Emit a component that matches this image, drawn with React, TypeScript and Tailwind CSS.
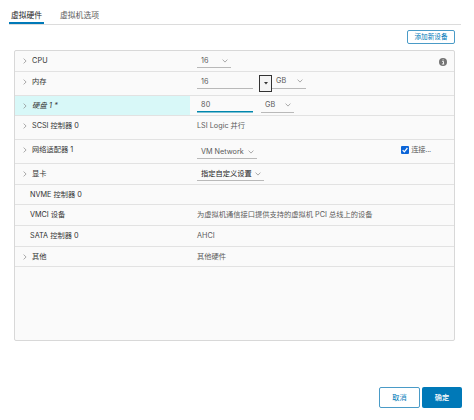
import type { ReactNode } from "react";

const Chevron = ({ className }: { className: string }) => (
  <svg viewBox="0 0 6 6" className={className} fill="none" stroke="currentColor">
    <path d="M0.6 1.6 3 4.1 5.4 1.6" strokeWidth="0.7" />
  </svg>
);

function Select({ children, className }: { children: ReactNode; className: string }) {
  return (
    <div className={`flex items-center justify-between border-b border-[#b9b9b9] pl-1 pr-[3px] ${className}`}>
      <span>{children}</span>
      <Chevron className="size-[6px] text-[#888]" />
    </div>
  );
}

type RowProps = {
  label: ReactNode;
  height: string;
  labelClass?: string;
  expandable?: boolean;
  children?: ReactNode;
};

function Row({ label, height, labelClass = "", expandable, children }: RowProps) {
  return (
    <div className={`flex border-b border-[#e2e2e2] ${height}`}>
      <div className={`flex w-[175px] shrink-0 items-center pl-[7px] text-[#333] ${labelClass}`}>
        {expandable && <Chevron className="mr-[4px] size-[6px] -rotate-90 text-[#888]" />}
        <span className={expandable ? "" : "pl-[8px]"}>{label}</span>
      </div>
      <div className="flex min-w-0 flex-1 items-center pl-[7px]">{children}</div>
    </div>
  );
}

export default function App() {
  return (
    <div className="flex h-[420px] w-[474px] flex-col whitespace-nowrap bg-white font-['Inter','Noto_Sans_CJK_SC',sans-serif] text-[7.25px] leading-[10px] text-[#5a5a5a]">
      <nav className="ml-[9px] mr-[13px] flex h-[25px] shrink-0 items-end border-b border-[#dcdcdc] text-[7.8px]">
        <div className="flex h-[14px] w-[35px] justify-center border-b-2 border-[#0079b8] text-[#222]">虚拟硬件</div>
        <div className="ml-4 h-[14px]">虚拟机选项</div>
      </nav>

      <div className="mr-[19px] mt-[5px] flex shrink-0 justify-end">
        <button className="h-[14px] w-[48px] rounded-[2px] border border-[#4a9bc7] text-[6.6px] leading-[12px] text-[#0079b8]">添加新设备</button>
      </div>

      <main className="ml-[14px] mt-[6px] h-[291px] w-[441px] shrink-0 rounded-[2px] border border-[#d8d8d8] bg-[#fafafa]">
        <Row label="CPU" height="h-[21px]" labelClass="tracking-[0.2px]" expandable>
          <Select className="h-[14px] w-[34px]">16</Select>
          <svg viewBox="0 0 8 8" className="ml-auto mr-[7px] mt-px size-[8px]">
            <circle cx="4" cy="4" r="4" fill="#747474" />
            <path d="M3.1 3.4h1.4v2.5M2.9 6h2.3M3.6 1.9h1" fill="none" stroke="#fff" strokeWidth="0.9" />
          </svg>
        </Row>
        <Row label="内存" height="h-[24px]" labelClass="pb-[3px]" expandable>
          <div className="-mt-1 h-[14px] w-[56px] border-b border-[#b9b9b9] pl-1 leading-[13px]">16</div>
          <div className="ml-[6px] flex h-[17px] w-[13px] items-center justify-center border border-[#333] bg-[#f4f4f4]">
            <svg viewBox="0 0 4 3" className="h-[3px] w-[4px]">
              <path d="M0 0h4L2 2.5z" fill="#333" />
            </svg>
          </div>
          <Select className="-mt-1 h-[14px] w-[34px]">GB</Select>
        </Row>
        <Row label="硬盘 1 *" height="h-[20px]" labelClass="bg-[#d8f8f8] italic tracking-[0.15px]" expandable>
          <div className="-mt-px h-[14px] w-[56px] border-b border-[#0087ad] pl-1 leading-[14px] tracking-[0.2px] shadow-[0_0.5px_0_#0087ad]">80</div>
          <Select className="ml-2 h-[14px] w-[33px]">GB</Select>
        </Row>
        <Row label="SCSI 控制器 0" height="h-[24px]" labelClass="pb-[3px]" expandable>
          <span className="-mt-[3px]">LSI Logic 并行</span>
        </Row>
        <Row label="网络适配器 1" height="h-[24px]" labelClass="pb-[4px]" expandable>
          <Select className="mt-px h-[13px] w-[60px]">VM Network</Select>
          <label className="-mt-[4px] ml-auto mr-[23px] flex items-center gap-[2px]">
            <span className="flex size-[8px] items-center justify-center rounded-[1px] bg-[#0b65d8]">
              <svg viewBox="0 0 8 8" className="size-[8px]" fill="none" stroke="#fff">
                <path d="M1.7 4.2 3.3 5.8 6.4 2" strokeWidth="1.2" />
              </svg>
            </span>
            <span className="tracking-[-0.2px]">连接...</span>
          </label>
        </Row>
        <Row label="显卡" height="h-[21px]" expandable>
          <Select className="h-[13px] w-[67px] text-[#222]">指定自定义设置</Select>
        </Row>
        <Row label="NVME 控制器 0" height="h-[20px]" />
        <Row label="VMCI 设备" height="h-[21px]">为虚拟机通信接口提供支持的虚拟机 PCI 总线上的设备</Row>
        <Row label="SATA 控制器 0" height="h-[21px]">AHCI</Row>
        <Row label="其他" height="h-[20px]" expandable>其他硬件</Row>
      </main>

      <footer className="ml-[379px] mt-[46px] flex gap-[2px] text-[7.2px]">
        <button className="h-[21px] w-[41px] rounded-[2px] border border-[#4a9bc7] text-[#0079b8]">取消</button>
        <button className="h-[21px] w-[40px] rounded-[2px] bg-[#0079b8] font-medium text-white">确定</button>
      </footer>
    </div>
  );
}
